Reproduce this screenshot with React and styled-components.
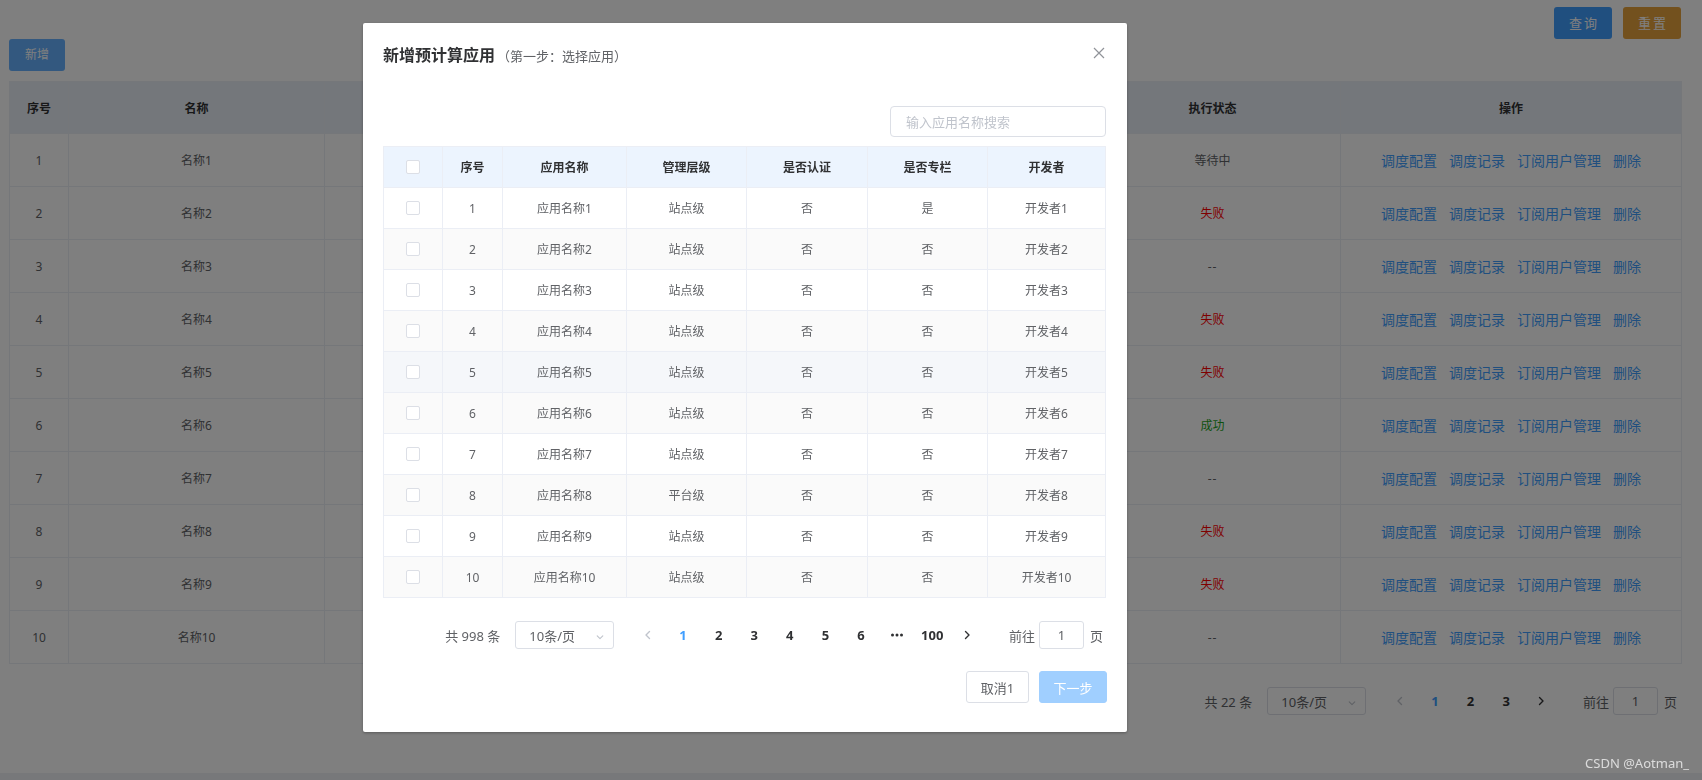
import React from "react";
import styled, { createGlobalStyle } from "styled-components";

const Global = createGlobalStyle`
  html, body { margin: 0; padding: 0; width: 1702px; height: 780px; overflow: hidden; background: #fff; }
  body { font-family: "Noto Sans", "Noto Sans CJK SC", sans-serif; color: #606266; }
  * { box-sizing: border-box; }
`;

const Page = styled.div`
  height: 780px;
  display: flex;
  flex-direction: column;
  padding: 7px 20px 0 9px;
`;

const TopBar = styled.div`
  display: flex;
  justify-content: flex-end;
  gap: 11px;
  height: 32px;
  padding-right: 1px;
`;

const Btn = styled.button`
  width: ${(p) => p.$w || 58}px;
  height: 32px;
  border: none;
  border-radius: 3px;
  background: ${(p) => p.$bg};
  color: #fff;
  font-family: inherit;
  font-size: ${(p) => p.$fs || 12}px;
  letter-spacing: ${(p) => p.$ls || 0}px;
  padding: 0 0 0 ${(p) => p.$ls || 0}px;
  line-height: 32px;
`;

const AddRow = styled.div`
  display: flex;
  height: 32px;
`;

const BgGrid = styled.div`
  margin-top: 10px;
  width: 1673px;
  border-top: 1px solid #ebeef5;
  border-left: 1px solid #ebeef5;
`;

const BgRow = styled.div`
  display: grid;
  grid-template-columns: 59px 256px 256px 256px 248px 256px 341px;
  height: ${(p) => (p.$head ? 52 : 53)}px;
  background: ${(p) => (p.$head ? "#e9eef6" : "#fff")};
`;

const BgCell = styled.div`
  display: flex;
  align-items: center;
  justify-content: center;
  gap: 12px;
  border-right: 1px solid #ebeef5;
  border-bottom: 1px solid #ebeef5;
  font-size: 12px;
  font-weight: ${(p) => (p.$head ? 700 : 400)};
  color: ${(p) => p.$color || (p.$head ? "#303133" : "#606266")};
  white-space: nowrap;
  letter-spacing: ${(p) => (p.$dash ? 1 : 0)}px;
`;

const Link = styled.span`
  color: #409eff;
  font-size: 14px;
`;

const BgPager = styled.div`
  margin-top: 23px;
  display: flex;
  justify-content: flex-end;
  align-items: center;
  height: 28px;
  padding-right: 5px;
`;

const Total = styled.span`
  font-size: 13px;
  color: #606266;
  margin-right: ${(p) => p.$mr}px;
  white-space: nowrap;
`;

const SizeSelect = styled.div`
  position: relative;
  width: 99px;
  height: 28px;
  border: 1px solid #dcdfe6;
  border-radius: 3px;
  display: flex;
  align-items: center;
  justify-content: center;
  padding-right: 25px;
  font-size: 13px;
  color: #606266;
  background: #fff;
  svg { position: absolute; right: 9px; top: 11px; }
`;

const NavBtn = styled.div`
  width: 35px;
  margin-left: ${(p) => p.$ml || 0}px;
  height: 28px;
  display: flex;
  align-items: center;
  justify-content: center;
`;

const PageNum = styled.div`
  width: 35.6px;
  height: 28px;
  display: flex;
  align-items: center;
  justify-content: center;
  font-size: 13px;
  font-weight: 700;
  color: ${(p) => (p.$active ? "#409eff" : "#303133")};
`;

const JumpLabel = styled.span`
  font-size: 13px;
  color: #606266;
  margin-left: ${(p) => p.$ml || 0}px;
  margin-right: ${(p) => p.$mr || 0}px;
  white-space: nowrap;
`;

const JumpInput = styled.div`
  width: 45px;
  height: 28px;
  border: 1px solid #dcdfe6;
  border-radius: 3px;
  display: flex;
  align-items: center;
  justify-content: center;
  font-size: 13px;
  color: #606266;
  background: #fff;
`;

const Strip = styled.div`
  margin: auto -20px 0 -9px;
  height: 7px;
  background: #eef0f4;
`;

const Overlay = styled.div`
  position: fixed;
  inset: 0;
  background: rgba(0, 0, 0, 0.5);
  z-index: 10;
`;

const Watermark = styled.div`
  position: fixed;
  right: 13px;
  bottom: 9px;
  font-size: 13px;
  line-height: 16px;
  color: rgba(255, 255, 255, 0.72);
  z-index: 30;
`;

const Modal = styled.div`
  position: fixed;
  left: 363px;
  top: 23px;
  width: 764px;
  height: 709px;
  background: #fff;
  border-radius: 2px;
  box-shadow: 0 1px 3px rgba(0, 0, 0, 0.3);
  z-index: 20;
  display: flex;
  flex-direction: column;
`;

const Header = styled.div`
  display: flex;
  align-items: center;
  justify-content: space-between;
  padding: 20px 22px 0 20px;
  height: 44px;
`;

const TitleWrap = styled.div`
  display: flex;
  align-items: baseline;
  line-height: 24px;
`;

const Title = styled.span`
  font-size: 16px;
  font-weight: 700;
  color: #303133;
`;

const Sub = styled.span`
  font-size: 13px;
  color: #606266;
  margin-left: 2px;
`;

const Close = styled.div`
  width: 12px;
  height: 12px;
  margin-top: -4px;
  display: flex;
`;

const Body = styled.div`
  padding: 39px 21px 0 20px;
  display: flex;
  flex-direction: column;
`;

const SearchRow = styled.div`
  display: flex;
  justify-content: flex-end;
`;

const Search = styled.div`
  width: 216px;
  height: 31px;
  border: 1px solid #dcdfe6;
  border-radius: 4px;
  padding: 0 15px;
  display: flex;
  align-items: center;
  font-size: 13px;
  color: #c0c4cc;
`;

const Grid = styled.div`
  margin-top: 9px;
  width: 723px;
  border-top: 1px solid #ebeef5;
  border-left: 1px solid #ebeef5;
`;

const GRow = styled.div`
  display: grid;
  grid-template-columns: 59px 60px 124px 120px 121px 120px 118px;
  height: 41px;
  background: ${(p) => p.$bg};
`;

const GCell = styled.div`
  display: flex;
  align-items: center;
  justify-content: center;
  border-right: 1px solid #ebeef5;
  border-bottom: 1px solid #ebeef5;
  font-size: 12px;
  font-weight: ${(p) => (p.$head ? 700 : 400)};
  color: ${(p) => (p.$head ? "#303133" : "#606266")};
  white-space: nowrap;
`;

const Check = styled.span`
  width: 14px;
  height: 14px;
  border: 1px solid #dcdfe6;
  border-radius: 2px;
  background: #fff;
`;

const MPager = styled.div`
  margin-top: 23px;
  height: 28px;
  display: flex;
  justify-content: flex-end;
  align-items: center;
  padding-right: 3px;
`;

const Footer = styled.div`
  margin-top: 22px;
  display: flex;
  justify-content: flex-end;
  gap: 10px;
  padding-right: 20px;
`;

const FBtn = styled.button`
  width: ${(p) => p.$w}px;
  height: 32px;
  border-radius: 3px;
  border: 1px solid ${(p) => (p.$primary ? "#a0cfff" : "#dcdfe6")};
  background: ${(p) => (p.$primary ? "#a0cfff" : "#fff")};
  color: ${(p) => (p.$primary ? "#fff" : "#606266")};
  font-family: inherit;
  font-size: 13px;
  padding: 0;
`;

const Chevron = ({ dir, color, size = 10 }) => (
  <svg width={size} height={size} viewBox="0 0 10 10">
    <polyline
      points={dir === "left" ? "6.5,1.5 3,5 6.5,8.5" : dir === "right" ? "3.5,1.5 7,5 3.5,8.5" : "1.5,3.5 5,7 8.5,3.5"}
      fill="none"
      stroke={color}
      strokeWidth="1.4"
      strokeLinecap="round"
      strokeLinejoin="round"
    />
  </svg>
);

const Dots = () => (
  <svg width="14" height="4" viewBox="0 0 14 4">
    <circle cx="2.5" cy="2" r="1.5" fill="#303133" />
    <circle cx="7" cy="2" r="1.5" fill="#303133" />
    <circle cx="11.5" cy="2" r="1.5" fill="#303133" />
  </svg>
);

const Pagination = ({ total, pages, Wrap }) => (
  <Wrap>
    <Total $mr={15}>共 {total} 条</Total>
    <SizeSelect>
      10条/页
      <Chevron dir="down" color="#c0c4cc" size={8} />
    </SizeSelect>
    <NavBtn $ml={16}><Chevron dir="left" color="#c0c4cc" /></NavBtn>
    {pages.map((n) => (
      <PageNum key={n} $active={n === "1"}>{n === "..." ? <Dots /> : n}</PageNum>
    ))}
    <NavBtn><Chevron dir="right" color="#303133" /></NavBtn>
    <JumpLabel $ml={24} $mr={4}>前往</JumpLabel>
    <JumpInput>1</JumpInput>
    <JumpLabel $ml={6}>页</JumpLabel>
  </Wrap>
);

const statuses = ["等待中", "失败", "--", "失败", "失败", "成功", "--", "失败", "失败", "--"];
const statusColor = { 失败: "#ff0000", 成功: "#1fa51f" };

const apps = Array.from({ length: 10 }, (_, i) => ({
  n: i + 1,
  name: `应用名称${i + 1}`,
  level: i === 7 ? "平台级" : "站点级",
  auth: "否",
  col: i === 0 ? "是" : "否",
  dev: `开发者${i + 1}`,
}));

const rowBg = (i) => (i === 4 ? "#f5f7fa" : i % 2 === 1 ? "#fafafa" : "#fff");

export default function App() {
  return (
    <>
      <Global />
      <Page>
        <TopBar>
          <Btn $bg="#409eff" $fs={13} $ls={2}>查询</Btn>
          <Btn $bg="#e6a23c" $fs={13} $ls={2}>重置</Btn>
        </TopBar>
        <AddRow>
          <Btn $bg="#66b1ff" $w={56}>新增</Btn>
        </AddRow>
        <BgGrid>
          <BgRow $head>
            <BgCell $head>序号</BgCell>
            <BgCell $head>名称</BgCell>
            <BgCell $head />
            <BgCell $head />
            <BgCell $head />
            <BgCell $head>执行状态</BgCell>
            <BgCell $head>操作</BgCell>
          </BgRow>
          {statuses.map((s, i) => (
            <BgRow key={i}>
              <BgCell>{i + 1}</BgCell>
              <BgCell>名称{i + 1}</BgCell>
              <BgCell />
              <BgCell />
              <BgCell />
              <BgCell $color={statusColor[s]} $dash={s === "--"}>{s}</BgCell>
              <BgCell>
                <Link>调度配置</Link>
                <Link>调度记录</Link>
                <Link>订阅用户管理</Link>
                <Link>删除</Link>
              </BgCell>
            </BgRow>
          ))}
        </BgGrid>
        <Pagination total={22} pages={["1", "2", "3"]} Wrap={BgPager} />
        <Strip />
      </Page>
      <Overlay />
      <Watermark>CSDN @Aotman_</Watermark>
      <Modal>
        <Header>
          <TitleWrap>
            <Title>新增预计算应用</Title>
            <Sub>（第一步：选择应用）</Sub>
          </TitleWrap>
          <Close>
            <svg width="12" height="12" viewBox="0 0 12 12">
              <path d="M1 1 L11 11 M11 1 L1 11" stroke="#909399" strokeWidth="1.2" />
            </svg>
          </Close>
        </Header>
        <Body>
          <SearchRow>
            <Search>输入应用名称搜索</Search>
          </SearchRow>
          <Grid>
            <GRow $bg="#ecf4fe">
              <GCell $head><Check /></GCell>
              {["序号", "应用名称", "管理层级", "是否认证", "是否专栏", "开发者"].map((h) => (
                <GCell $head key={h}>{h}</GCell>
              ))}
            </GRow>
            {apps.map((a, i) => (
              <GRow key={a.n} $bg={rowBg(i)}>
                <GCell><Check /></GCell>
                <GCell>{a.n}</GCell>
                <GCell>{a.name}</GCell>
                <GCell>{a.level}</GCell>
                <GCell>{a.auth}</GCell>
                <GCell>{a.col}</GCell>
                <GCell>{a.dev}</GCell>
              </GRow>
            ))}
          </Grid>
          <Pagination total={998} pages={["1", "2", "3", "4", "5", "6", "...", "100"]} Wrap={MPager} />
        </Body>
        <Footer>
          <FBtn $w={63}>取消1</FBtn>
          <FBtn $w={68} $primary>下一步</FBtn>
        </Footer>
      </Modal>
    </>
  );
}
